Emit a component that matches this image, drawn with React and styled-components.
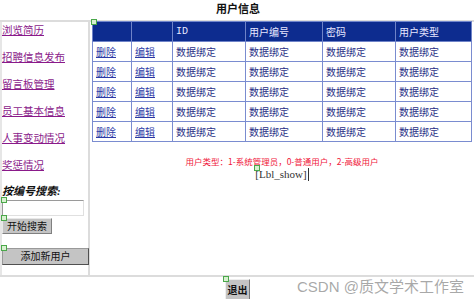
import styled, { createGlobalStyle } from "styled-components";

const GlobalStyle = createGlobalStyle`
  html, body {
    margin: 0;
    padding: 0;
    background: #ffffff;
    width: 474px;
    height: 299px;
    overflow: hidden;
  }
  body {
    font-family: "Noto Sans CJK SC", "Liberation Sans", sans-serif;
  }
`;

const columns = [
  { label: "", width: 39 },
  { label: "", width: 41 },
  { label: "ID", width: 73 },
  { label: "用户编号", width: 77 },
  { label: "密码", width: 73 },
  { label: "用户类型", width: 76 },
];
const rows = [1, 2, 3, 4, 5];

const App = () => {
  return (
    <Page>
      <GlobalStyle />
      <Title>用户信息</Title>
      <Main>
        <SideBar>
          <NavLink>浏览简历</NavLink>
          <NavLink>招聘信息发布</NavLink>
          <NavLink>留言板管理</NavLink>
          <NavLink>员工基本信息</NavLink>
          <NavLink>人事变动情况</NavLink>
          <NavLink>奖惩情况</NavLink>
          <SearchLabel>按编号搜索:</SearchLabel>
          <Marked>
            <Marker />
            <SearchInput />
          </Marked>
          <Marked>
            <Marker />
            <SmallButton>开始搜索</SmallButton>
          </Marked>
          <Marked $top={14}>
            <Marker />
            <WideButton>添加新用户</WideButton>
          </Marked>
        </SideBar>
        <Content>
          <Marked>
            <Marker />
            <Grid>
              <colgroup>
                {columns.map((c, i) => (
                  <col key={i} style={{ width: c.width }} />
                ))}
              </colgroup>
              <thead>
                <tr>
                  {columns.map((c, i) => (
                    <HeadCell key={i} $mono={c.label === "ID"}>
                      {c.label}
                    </HeadCell>
                  ))}
                </tr>
              </thead>
              <tbody>
                {rows.map((r) => (
                  <tr key={r}>
                    <Cell>
                      <RowLink>删除</RowLink>
                    </Cell>
                    <Cell>
                      <RowLink>编辑</RowLink>
                    </Cell>
                    <Cell>数据绑定</Cell>
                    <Cell>数据绑定</Cell>
                    <Cell>数据绑定</Cell>
                    <Cell>数据绑定</Cell>
                  </tr>
                ))}
              </tbody>
            </Grid>
          </Marked>
          <Note>用户类型：1-系统管理员，0-普通用户，2-高级用户</Note>
          <LabelRow>
            <Marked>
              <Marker />
              <LabelText>[Lbl_show]</LabelText>
            </Marked>
          </LabelRow>
        </Content>
      </Main>
      <Footer>
        <Marked>
          <Marker />
          <ExitButton>退出</ExitButton>
        </Marked>
        <Watermark>CSDN @质文学术工作室</Watermark>
      </Footer>
    </Page>
  );
};

const Page = styled.div`
  position: relative;
  width: 474px;
  height: 299px;
  display: flex;
  flex-direction: column;
`;

const Title = styled.div`
  height: 20px;
  text-align: center;
  font-size: 11px;
  font-weight: bold;
  line-height: 17px;
  color: #111;
  padding-left: 2px;
`;

const Main = styled.div`
  display: flex;
  height: 258px;
  border-top: 2px solid #dcdcdc;
  border-bottom: 2px solid #dcdcdc;
  box-sizing: border-box;
`;

const SideBar = styled.div`
  width: 90px;
  border-left: 2px solid #e6e6e6;
  border-right: 2px solid #dcdcdc;
  box-sizing: border-box;
  display: flex;
  flex-direction: column;
  align-items: flex-start;
`;

const NavLink = styled.a`
  display: block;
  height: 26px;
  line-height: 14px;
  padding-top: 1px;
  font-size: 10.5px;
  color: #8a1a8a;
  text-decoration: underline;
  white-space: nowrap;
  cursor: pointer;
`;

const SearchLabel = styled.div`
  font-family: "Liberation Serif", "Noto Sans CJK SC", serif;
  font-size: 11px;
  font-weight: bold;
  font-style: italic;
  color: #111;
  line-height: 14px;
  margin-bottom: 2px;
`;

const Marked = styled.div`
  position: relative;
  font-size: 0;
  line-height: 0;
  margin-top: ${({ $top }) => ($top ? `${$top}px` : "0")};
`;

const Marker = styled.span`
  position: absolute;
  left: -1px;
  top: -3px;
  width: 4px;
  height: 4px;
  background: #d8f0d0;
  border: 1px solid #4aa84a;
  z-index: 2;
`;

const SearchInput = styled.div`
  width: 80px;
  height: 14px;
  margin-bottom: 2px;
  border: 1px solid #9a9a9a;
  border-right-color: #e0e0e0;
  border-bottom-color: #e0e0e0;
  background: #fff;
`;

const ButtonBase = styled.div`
  display: flex;
  align-items: center;
  justify-content: center;
  background: #c4c4c4;
  font-size: 10px;
  line-height: 12px;
  color: #111;
  box-sizing: border-box;
`;

const SmallButton = styled(ButtonBase)`
  width: 50px;
  height: 16px;
  border: 1px solid #e8e8e8;
  border-right-color: #808080;
  border-bottom-color: #808080;
`;

const WideButton = styled(ButtonBase)`
  width: 87px;
  height: 17px;
  border: 1px solid #505050;
  border-top-color: #999;
  border-left-color: #999;
`;

const Content = styled.div`
  flex: 1;
  padding-left: 2px;
  padding-right: 2px;
  display: flex;
  flex-direction: column;
`;

const Grid = styled.table`
  width: 379px;
  border-collapse: collapse;
  table-layout: fixed;
  margin-top: -1px;
  border: 1px solid #7086cc;
  line-height: normal;
`;

const HeadCell = styled.th`
  height: 19px;
  background: #0d2c8f;
  color: #e8e8ff;
  font-family: ${({ $mono }) =>
    $mono
      ? `"Liberation Mono", "Noto Sans CJK SC", monospace`
      : `"Noto Sans CJK SC", sans-serif`};
  font-size: 10px;
  font-weight: normal;
  text-align: left;
  padding: 0 3px;
  border: 1px solid #6f83c8;
  border-top: none;
  white-space: nowrap;
  overflow: hidden;
`;

const Cell = styled.td`
  height: 19px;
  padding: 0 3px;
  font-size: 10px;
  color: #2a2f86;
  border: 1px solid #7a8cd0;
  white-space: nowrap;
  overflow: hidden;
`;

const RowLink = styled.a`
  color: #2c3aa6;
  text-decoration: underline;
  cursor: pointer;
`;

const Note = styled.div`
  margin-top: 13px;
  text-align: center;
  font-size: 8.5px;
  color: #f0153a;
  line-height: 12px;
`;

const LabelRow = styled.div`
  display: flex;
  justify-content: center;
  margin-top: 1px;
`;

const LabelText = styled.span`
  display: block;
  font-family: "Liberation Serif", serif;
  font-size: 11px;
  color: #333;
  line-height: 13px;
  border-right: 1px solid #333;
  padding-right: 1px;
`;

const Footer = styled.div`
  position: relative;
  flex: 1;
  display: flex;
  justify-content: center;
  padding-top: 2px;
`;

const ExitButton = styled(ButtonBase)`
  width: 25px;
  height: 20px;
  font-weight: bold;
  border: 1px solid #eee;
  border-right-color: #777;
  border-bottom: none;
  margin-left: 1px;
`;

const Watermark = styled.div`
  position: absolute;
  left: 297px;
  top: 1px;
  font-family: "Liberation Sans", "Noto Sans CJK SC", sans-serif;
  font-size: 15px;
  line-height: 18px;
  color: rgba(140, 140, 140, 0.75);
  white-space: nowrap;
`;

export default App;
